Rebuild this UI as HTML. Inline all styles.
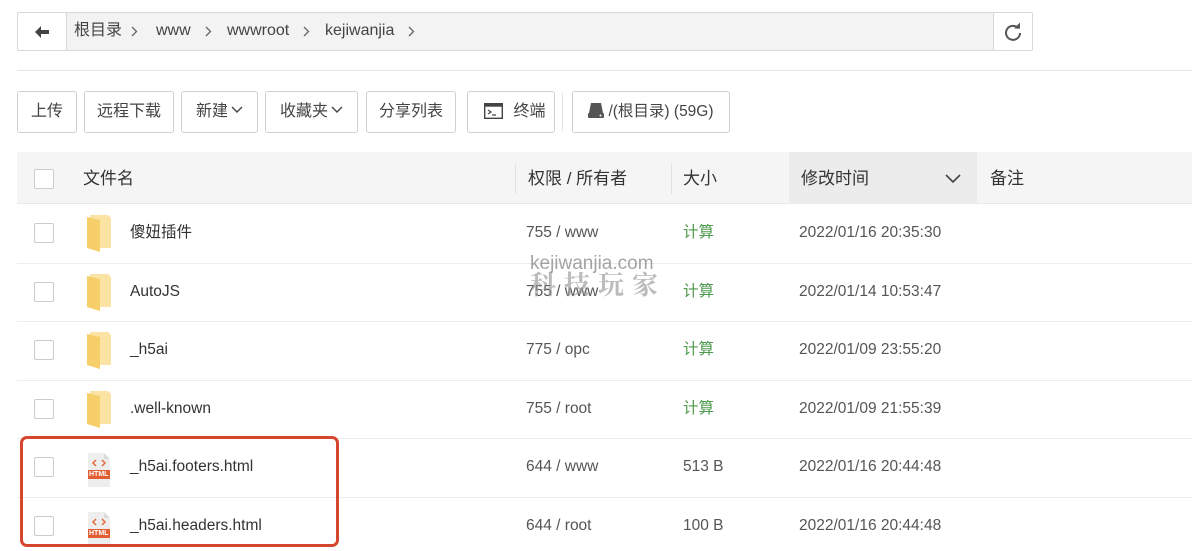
<!DOCTYPE html>
<html><head><meta charset="utf-8">
<style>
*{margin:0;padding:0;box-sizing:border-box}
body{width:1192px;height:551px;background:#fff;position:relative;overflow:hidden;font-family:"Liberation Sans","Noto Sans CJK SC",sans-serif;color:#333}
.a{position:absolute}
.crumb{left:17px;top:12px;width:1016px;height:39px;border:1px solid #d8d8d8;background:#f3f3f3;border-radius:2px}
.back{left:17px;top:12px;width:50px;height:39px;background:#fff;border:1px solid #d8d8d8;border-radius:2px 0 0 2px}
.ref{left:993px;top:12px;width:40px;height:39px;background:#fff;border:1px solid #d8d8d8;border-radius:0 2px 2px 0}
.ct{top:20px;font-size:16px;color:#444;line-height:22px}
.sep{top:20px;font-size:16px;color:#777;line-height:22px}
.btn{top:91px;height:42px;border:1px solid #d0d0d0;border-radius:3px;background:#fff;font-size:16px;color:#444;line-height:40px;text-align:center}
.hd{left:17px;top:152px;width:1175px;height:52px;background:#f5f5f5;border-bottom:1px solid #e8e8e8}
.ht{top:168px;font-size:17px;color:#333;line-height:22px}
.cb{width:20px;height:20px;border:1px solid #ccc;border-radius:2px;background:#fff;left:34px}
.line{left:17px;width:1175px;height:1px;background:#ececec}
.t{font-size:15.5px;color:#555;line-height:20px}
.g{color:#4e9a4e}
</style></head><body>
<div class="a crumb"></div>
<div class="a back"><svg class="a" style="left:15px;top:12px" width="18" height="14" viewBox="0 0 18 14"><path d="M8 1L2 7l6 6V9h8V5H8z" fill="#444"/></svg></div>
<div class="a ref"><svg class="a" style="left:9px;top:9px" width="20" height="20" viewBox="0 0 20 20"><path d="M15.5 6.5A7 7 0 1 0 17 11" fill="none" stroke="#555" stroke-width="2"/><path d="M11 6.5h6v-6z" fill="#555"/></svg></div>
<div class="a ct" style="left:74px">根目录</div>
<svg class="a" style="left:131px;top:26px" width="7" height="11" viewBox="0 0 7 11"><path d="M1 1l4.5 4.5L1 10" fill="none" stroke="#666" stroke-width="1.3"/></svg>
<div class="a ct" style="left:156px">www</div>
<svg class="a" style="left:205px;top:26px" width="7" height="11" viewBox="0 0 7 11"><path d="M1 1l4.5 4.5L1 10" fill="none" stroke="#666" stroke-width="1.3"/></svg>
<div class="a ct" style="left:227px">wwwroot</div>
<svg class="a" style="left:303px;top:26px" width="7" height="11" viewBox="0 0 7 11"><path d="M1 1l4.5 4.5L1 10" fill="none" stroke="#666" stroke-width="1.3"/></svg>
<div class="a ct" style="left:325px">kejiwanjia</div>
<svg class="a" style="left:408px;top:26px" width="7" height="11" viewBox="0 0 7 11"><path d="M1 1l4.5 4.5L1 10" fill="none" stroke="#666" stroke-width="1.3"/></svg>
<div class="a" style="left:17px;top:70px;width:1175px;height:1px;background:#e6e6e6"></div>

<div class="a btn" style="left:17px;width:60px">上传</div>
<div class="a btn" style="left:84px;width:90px">远程下载</div>
<div class="a btn" style="left:181px;width:77px">新建<svg style="margin-left:3px;vertical-align:2px" width="12" height="8" viewBox="0 0 12 8"><path d="M1 1l5 5 5-5" fill="none" stroke="#444" stroke-width="1.4"/></svg></div>
<div class="a btn" style="left:265px;width:93px">收藏夹<svg style="margin-left:3px;vertical-align:2px" width="12" height="8" viewBox="0 0 12 8"><path d="M1 1l5 5 5-5" fill="none" stroke="#444" stroke-width="1.4"/></svg></div>
<div class="a btn" style="left:366px;width:90px">分享列表</div>
<div class="a btn" style="left:467px;width:88px;padding-left:8px"><svg style="vertical-align:-3px;margin-right:10px" width="19" height="16" viewBox="0 0 19 16"><rect x="0.7" y="0.7" width="17.6" height="14.6" fill="#fff" stroke="#444" stroke-width="1.4"/><rect x="0.7" y="0.7" width="17.6" height="3" fill="#444"/><path d="M4 7l3 2-3 2M8 12h4" fill="none" stroke="#444" stroke-width="1.2"/></svg>终端</div>
<div class="a" style="left:562px;top:93px;width:1px;height:38px;background:#e3e3e3"></div>
<div class="a btn" style="left:572px;width:158px;font-size:15.5px"><svg style="vertical-align:-2px;margin-right:4px" width="16" height="15" viewBox="0 0 16 15"><path d="M3 0h10l2 10H1z" fill="#555"/><rect x="0" y="10" width="16" height="5" rx="1" fill="#555"/><circle cx="12.5" cy="12.5" r="1" fill="#fff"/></svg>/(根目录) (59G)</div>

<div class="a hd"></div>
<div class="a" style="left:789px;top:152px;width:188px;height:52px;background:#ececec"></div>
<div class="a" style="left:515px;top:164px;width:1px;height:30px;background:#e2e2e2"></div>
<div class="a" style="left:671px;top:164px;width:1px;height:30px;background:#e2e2e2"></div>
<div class="a cb" style="top:169px"></div>
<div class="a ht" style="left:83px">文件名</div>
<div class="a ht" style="left:528px">权限 / 所有者</div>
<div class="a ht" style="left:683px">大小</div>
<div class="a ht" style="left:801px">修改时间</div>
<svg class="a" style="left:945px;top:174px" width="16" height="10" viewBox="0 0 16 10"><path d="M1 1l7 7 7-7" fill="none" stroke="#444" stroke-width="1.6"/></svg>
<div class="a ht" style="left:990px">备注</div>

<div class="a line" style="top:263px"></div>
<div class="a line" style="top:321px"></div>
<div class="a line" style="top:380px"></div>
<div class="a line" style="top:438px"></div>
<div class="a line" style="top:497px"></div>

<svg width="0" height="0" style="position:absolute"><defs>
<g id="fd"><path d="M4 0h18l3 3v30H4z" fill="#fbe3a3"/><path d="M1 2l13 3v32L1 33z" fill="#f6ce6a"/></g>
<g id="ht"><path d="M0 0h16l6 6v28H0z" fill="#eeeeee"/><path d="M16 0v6h6z" fill="#dcdcdc"/><path d="M8 7l-3 3 3 3M14 7l3 3-3 3" fill="none" stroke="#e36b3a" stroke-width="1.5"/><rect x="0" y="17" width="22" height="9" fill="#e15f33"/></g>
</defs></svg>

<div class="a cb" style="top:223px"></div>
<svg class="a" style="left:86px;top:215px" width="26" height="37"><use href="#fd"/></svg>
<div class="a t" style="left:130px;top:223px;color:#333">傻妞插件</div>
<div class="a t" style="left:526px;top:223px">755 / www</div>
<div class="a t g" style="left:683px;top:223px">计算</div>
<div class="a t" style="left:799px;top:223px">2022/01/16 20:35:30</div>

<div class="a cb" style="top:282px"></div>
<svg class="a" style="left:86px;top:274px" width="26" height="37"><use href="#fd"/></svg>
<div class="a t" style="left:130px;top:282px;color:#333">AutoJS</div>
<div class="a t" style="left:526px;top:282px">755 / www</div>
<div class="a t g" style="left:683px;top:282px">计算</div>
<div class="a t" style="left:799px;top:282px">2022/01/14 10:53:47</div>

<div class="a cb" style="top:340px"></div>
<svg class="a" style="left:86px;top:332px" width="26" height="37"><use href="#fd"/></svg>
<div class="a t" style="left:130px;top:340px;color:#333">_h5ai</div>
<div class="a t" style="left:526px;top:340px">775 / opc</div>
<div class="a t g" style="left:683px;top:340px">计算</div>
<div class="a t" style="left:799px;top:340px">2022/01/09 23:55:20</div>

<div class="a cb" style="top:399px"></div>
<svg class="a" style="left:86px;top:391px" width="26" height="37"><use href="#fd"/></svg>
<div class="a t" style="left:130px;top:399px;color:#333">.well-known</div>
<div class="a t" style="left:526px;top:399px">755 / root</div>
<div class="a t g" style="left:683px;top:399px">计算</div>
<div class="a t" style="left:799px;top:399px">2022/01/09 21:55:39</div>

<div class="a cb" style="top:457px"></div>
<svg class="a" style="left:88px;top:453px" width="22" height="34"><use href="#ht"/></svg>
<div class="a" style="left:89px;top:471px;font-size:7px;color:#fff;font-weight:bold;line-height:8px">HTML</div>
<div class="a t" style="left:130px;top:457px;color:#333">_h5ai.footers.html</div>
<div class="a t" style="left:526px;top:457px">644 / www</div>
<div class="a t" style="left:683px;top:457px">513 B</div>
<div class="a t" style="left:799px;top:457px">2022/01/16 20:44:48</div>

<div class="a cb" style="top:516px"></div>
<svg class="a" style="left:88px;top:512px" width="22" height="34"><use href="#ht"/></svg>
<div class="a" style="left:89px;top:530px;font-size:7px;color:#fff;font-weight:bold;line-height:8px">HTML</div>
<div class="a t" style="left:130px;top:516px;color:#333">_h5ai.headers.html</div>
<div class="a t" style="left:526px;top:516px">644 / root</div>
<div class="a t" style="left:683px;top:516px">100 B</div>
<div class="a t" style="left:799px;top:516px">2022/01/16 20:44:48</div>

<div class="a" style="left:530px;top:253px;font-size:19px;color:rgba(140,140,140,0.8);line-height:22px">kejiwanjia.com</div>
<div class="a" style="left:530px;top:270px;font-size:26px;color:rgba(150,150,150,0.65);letter-spacing:8px;line-height:28px;font-weight:bold;font-family:'Noto Serif CJK SC',serif">科技玩家</div>

<div class="a" style="left:20px;top:436px;width:319px;height:111px;border:3px solid #d6452f;border-radius:7px"></div>
</body></html>
